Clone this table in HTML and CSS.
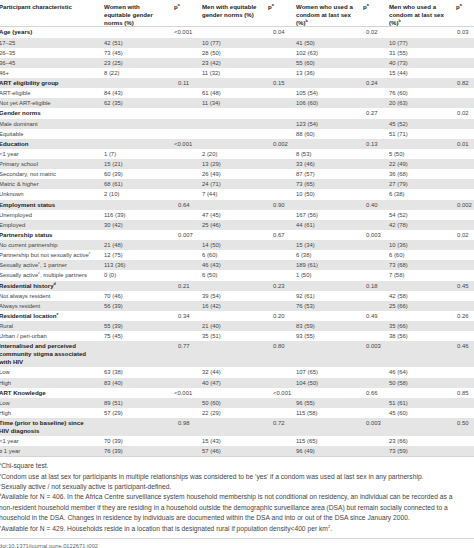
FILE: index.html
```html
<!DOCTYPE html>
<html>
<head>
<meta charset="utf-8">
<link rel="stylesheet" href="styles.css">
</head>
<body>
<div class="page">
<table class="tbl">
<colgroup>
<col class="c-label"><col class="c-val"><col class="c-p1"><col class="c-val2"><col class="c-p"><col class="c-val3"><col class="c-p"><col class="c-val4"><col class="c-plast">
</colgroup>
<thead>
<tr>
<th>Participant characteristic</th>
<th>Women with<br>equitable gender<br>norms (%)</th>
<th>p<sup>a</sup></th>
<th>Men with equitable<br>gender norms (%)</th>
<th class="ph-2">p<sup>a</sup></th>
<th>Women who used a<br>condom at last sex<br>(%)<sup>b</sup></th>
<th class="ph-3">p<sup>a</sup></th>
<th>Men who used a<br>condom at last sex<br>(%)<sup>b</sup></th>
<th class="ph-4">p<sup>a</sup></th>
</tr>
</thead>
<tbody>
<tr class="sec"><td>Age (years)</td><td></td><td class="lt">&lt;0.001</td><td></td><td>0.04</td><td></td><td>0.02</td><td></td><td>0.03</td></tr>
<tr><td>17–25</td><td>42 (51)</td><td></td><td>10 (77)</td><td></td><td>41 (50)</td><td></td><td>10 (77)</td><td></td></tr>
<tr><td>26–35</td><td>73 (45)</td><td></td><td>28 (50)</td><td></td><td>102 (63)</td><td></td><td>31 (55)</td><td></td></tr>
<tr><td>36–45</td><td>23 (25)</td><td></td><td>23 (42)</td><td></td><td>55 (60)</td><td></td><td>40 (73)</td><td></td></tr>
<tr><td>46+</td><td>8 (22)</td><td></td><td>11 (32)</td><td></td><td>13 (36)</td><td></td><td>15 (44)</td><td></td></tr>
<tr class="sec"><td>ART eligibility group</td><td></td><td>0.11</td><td></td><td>0.15</td><td></td><td>0.24</td><td></td><td>0.82</td></tr>
<tr><td>ART-eligible</td><td>84 (43)</td><td></td><td>61 (48)</td><td></td><td>105 (54)</td><td></td><td>76 (60)</td><td></td></tr>
<tr><td>Not yet ART-eligible</td><td>62 (35)</td><td></td><td>11 (34)</td><td></td><td>106 (60)</td><td></td><td>20 (63)</td><td></td></tr>
<tr class="sec"><td>Gender norms</td><td></td><td></td><td></td><td></td><td></td><td>0.27</td><td></td><td>0.02</td></tr>
<tr><td>Male dominant</td><td></td><td></td><td></td><td></td><td>123 (54)</td><td></td><td>45 (52)</td><td></td></tr>
<tr><td>Equitable</td><td></td><td></td><td></td><td></td><td>88 (60)</td><td></td><td>51 (71)</td><td></td></tr>
<tr class="sec"><td>Education</td><td></td><td class="lt">&lt;0.001</td><td></td><td>0.002</td><td></td><td>0.13</td><td></td><td>0.01</td></tr>
<tr><td>&lt;1 year</td><td>1 (7)</td><td></td><td>2 (20)</td><td></td><td>8 (53)</td><td></td><td>5 (50)</td><td></td></tr>
<tr><td>Primary school</td><td>15 (21)</td><td></td><td>13 (29)</td><td></td><td>33 (46)</td><td></td><td>22 (49)</td><td></td></tr>
<tr><td>Secondary, not matric</td><td>60 (39)</td><td></td><td>26 (49)</td><td></td><td>87 (57)</td><td></td><td>36 (68)</td><td></td></tr>
<tr><td>Matric &amp; higher</td><td>68 (61)</td><td></td><td>24 (71)</td><td></td><td>73 (65)</td><td></td><td>27 (79)</td><td></td></tr>
<tr><td>Unknown</td><td>2 (10)</td><td></td><td>7 (44)</td><td></td><td>10 (50)</td><td></td><td>6 (38)</td><td></td></tr>
<tr class="sec"><td>Employment status</td><td></td><td>0.64</td><td></td><td>0.90</td><td></td><td>0.40</td><td></td><td>0.002</td></tr>
<tr><td>Unemployed</td><td>116 (39)</td><td></td><td>47 (45)</td><td></td><td>167 (56)</td><td></td><td>54 (52)</td><td></td></tr>
<tr><td>Employed</td><td>30 (42)</td><td></td><td>25 (46)</td><td></td><td>44 (61)</td><td></td><td>42 (78)</td><td></td></tr>
<tr class="sec"><td>Partnership status</td><td></td><td>0.007</td><td></td><td>0.67</td><td></td><td>0.003</td><td></td><td>0.02</td></tr>
<tr><td>No current partnership</td><td>21 (48)</td><td></td><td>14 (50)</td><td></td><td>15 (34)</td><td></td><td>10 (36)</td><td></td></tr>
<tr><td>Partnership but not sexually active<sup>c</sup></td><td>12 (75)</td><td></td><td>6 (60)</td><td></td><td>6 (38)</td><td></td><td>6 (60)</td><td></td></tr>
<tr><td>Sexually active<sup>c</sup>, 1 partner</td><td>113 (36)</td><td></td><td>46 (43)</td><td></td><td>189 (61)</td><td></td><td>73 (68)</td><td></td></tr>
<tr><td>Sexually active<sup>c</sup>, multiple partners</td><td>0 (0)</td><td></td><td>6 (50)</td><td></td><td>1 (50)</td><td></td><td>7 (58)</td><td></td></tr>
<tr class="sec"><td>Residential history<sup>d</sup></td><td></td><td>0.21</td><td></td><td>0.23</td><td></td><td>0.18</td><td></td><td>0.45</td></tr>
<tr><td>Not always resident</td><td>70 (46)</td><td></td><td>39 (54)</td><td></td><td>92 (61)</td><td></td><td>42 (58)</td><td></td></tr>
<tr><td>Always resident</td><td>56 (39)</td><td></td><td>16 (42)</td><td></td><td>76 (53)</td><td></td><td>25 (66)</td><td></td></tr>
<tr class="sec"><td>Residential location<sup>e</sup></td><td></td><td>0.34</td><td></td><td>0.20</td><td></td><td>0.49</td><td></td><td>0.26</td></tr>
<tr><td>Rural</td><td>55 (39)</td><td></td><td>21 (40)</td><td></td><td>83 (59)</td><td></td><td>35 (66)</td><td></td></tr>
<tr><td>Urban / peri-urban</td><td>75 (45)</td><td></td><td>35 (51)</td><td></td><td>93 (55)</td><td></td><td>38 (56)</td><td></td></tr>
<tr class="sec"><td>Internalised and perceived<br>community stigma associated<br>with HIV</td><td></td><td>0.77</td><td></td><td>0.80</td><td></td><td>0.003</td><td></td><td>0.46</td></tr>
<tr><td>Low</td><td>63 (38)</td><td></td><td>32 (44)</td><td></td><td>107 (65)</td><td></td><td>46 (64)</td><td></td></tr>
<tr><td>High</td><td>83 (40)</td><td></td><td>40 (47)</td><td></td><td>104 (50)</td><td></td><td>50 (58)</td><td></td></tr>
<tr class="sec"><td>ART Knowledge</td><td></td><td class="lt">&lt;0.001</td><td></td><td>&lt;0.001</td><td></td><td>0.66</td><td></td><td>0.85</td></tr>
<tr><td>Low</td><td>89 (51)</td><td></td><td>50 (60)</td><td></td><td>96 (55)</td><td></td><td>51 (61)</td><td></td></tr>
<tr><td>High</td><td>57 (29)</td><td></td><td>22 (29)</td><td></td><td>115 (58)</td><td></td><td>45 (60)</td><td></td></tr>
<tr class="sec"><td>Time (prior to baseline) since<br>HIV diagnosis</td><td></td><td>0.98</td><td></td><td>0.72</td><td></td><td>0.003</td><td></td><td>0.50</td></tr>
<tr><td>&lt;1 year</td><td>70 (39)</td><td></td><td>15 (43)</td><td></td><td>115 (65)</td><td></td><td>23 (66)</td><td></td></tr>
<tr><td>≥ 1 year</td><td>76 (39)</td><td></td><td>57 (46)</td><td></td><td>96 (49)</td><td></td><td>73 (59)</td><td></td></tr>
</tbody>
</table>
<div class="notes">
<p><sup>a</sup>Chi-square test.</p>
<p><sup>b</sup>Condom use at last sex for participants in multiple relationships was considered to be 'yes' if a condom was used at last sex in any partnership.</p>
<p><sup>c</sup>Sexually active / not sexually active is participant-defined.</p>
<p><sup>d</sup>Available for N = 406. In the Africa Centre surveillance system household membership is not conditional on residency, an individual can be recorded as a<br>non-resident household member if they are residing in a household outside the demographic surveillance area (DSA) but remain socially connected to a<br>household in the DSA. Changes in residence by individuals are documented within the DSA and into or out of the DSA since January 2000.</p>
<p class="last"><sup>e</sup>Available for N = 429. Households reside in a location that is designated rural if population density&lt;400 per km<sup>2</sup>.</p>
</div>
<div class="doi">doi:10.1371/journal.pone.0122671.t002</div>
</div>
</body>
</html>
```

FILE: styles.css
```css
html, body {
  margin: 0;
  padding: 0;
  overflow: hidden;
  background: #ffffff;
}
.page {
  width: 540px;
  margin-left: -1px;
  font-family: "Liberation Sans", Arial, sans-serif;
  color: #444;
}
.tbl {
  border-collapse: collapse;
  table-layout: fixed;
  width: 500px;
  font-size: 5.9px;
}
.c-label { width: 105px; }
.c-val { width: 70px; }
.c-p1 { width: 28px; }
.c-val2 { width: 71px; }
.c-p { width: 23px; }
.c-val3 { width: 70px; }
.c-val4 { width: 68px; }
.c-plast { width: 42px; }
.tbl th {
  text-align: left;
  vertical-align: top;
  font-weight: bold;
  font-size: 6.1px;
  color: #222;
  line-height: 7.8px;
  padding: 3px 0 0 0;
  border-bottom: 1px solid #d4d4d4;
}
.tbl th.ph-2 { text-indent: -5px; }
.tbl th.ph-3 { text-indent: -3px; }
.tbl th.ph-4 { text-indent: -1px; }
.tbl td {
  text-align: left;
  vertical-align: top;
  line-height: 8px;
  padding: 1.07px 0;
  white-space: nowrap;
}
.tbl tbody tr:nth-child(even) td {
  background: #e5e5e5;
}
.tbl tbody tr:last-child td {
  border-bottom: 1px solid #d4d4d4;
}
.tbl tr.sec td:first-child {
  font-weight: bold;
  font-size: 6.1px;
  color: #222;
}
.tbl td:nth-child(3) {
  padding-left: 4px;
}
.tbl td.lt {
  padding-left: 0;
}
sup {
  font-size: 0.6em;
  vertical-align: 3px;
  line-height: 0;
}
.notes {
  padding-top: 4px;
  font-size: 6.7px;
}
.notes p {
  margin: 0;
  line-height: 10.3px;
  white-space: nowrap;
  color: #444;
}
.notes p.last {
  margin-top: 1px;
}
.doi {
  margin-top: 4px;
  padding-top: 3px;
  border-top: 1px solid #d4d4d4;
  font-size: 5.7px;
  color: #666;
  line-height: 8px;
}
```
